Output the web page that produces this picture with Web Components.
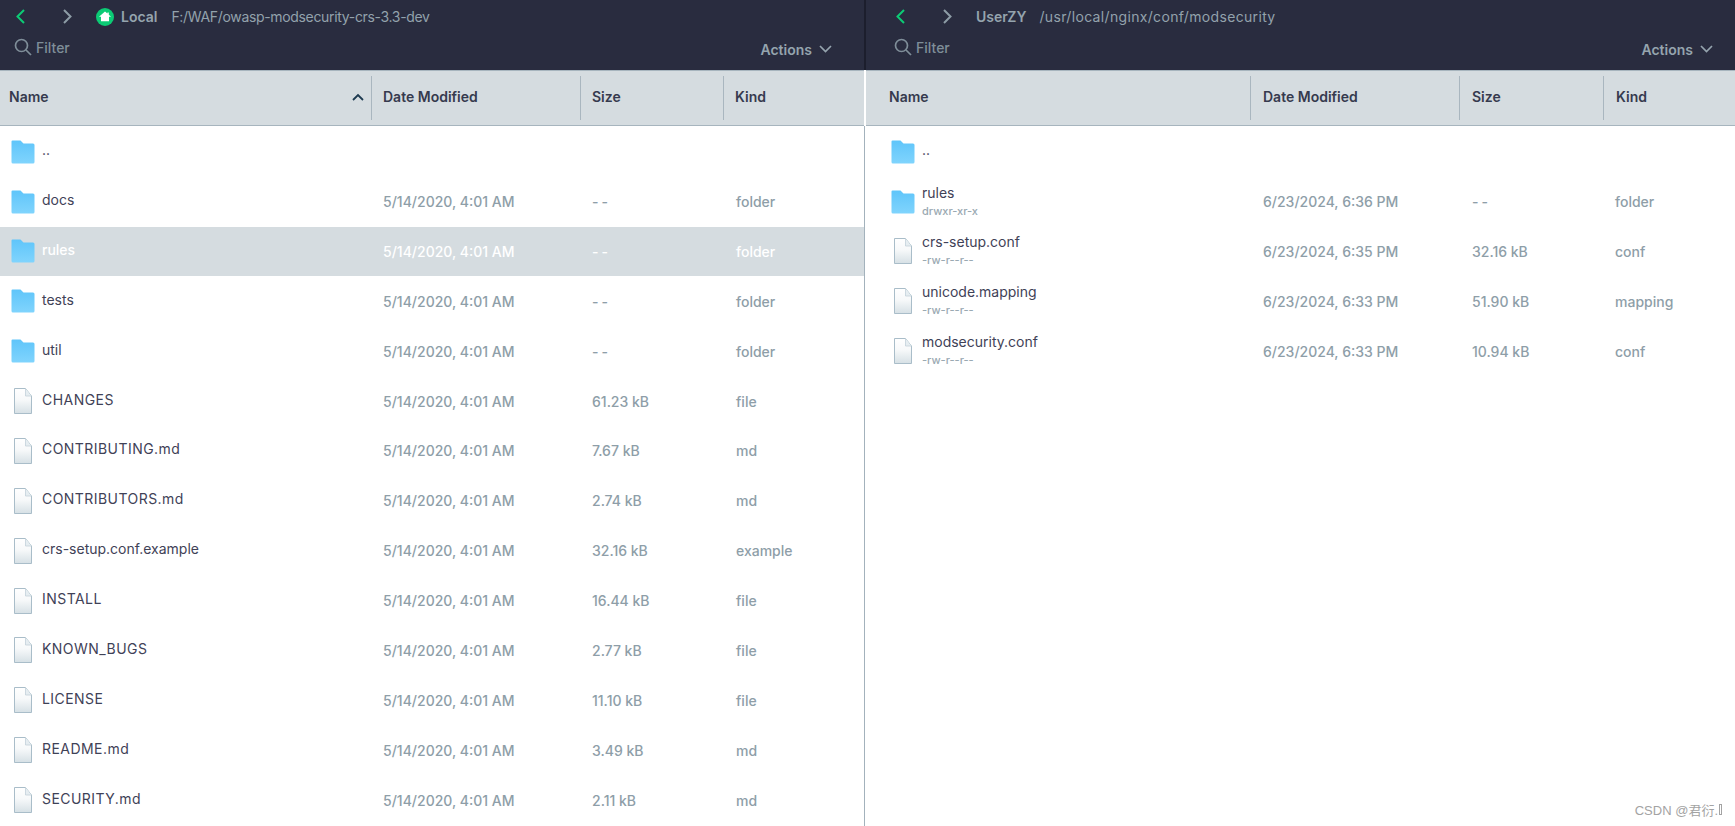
<!DOCTYPE html>
<html>
<head>
<meta charset="utf-8">
<title>SFTP</title>
<style>
  html, body { margin: 0; height: 100%; overflow: hidden; background: #fff; }
  body { font-family: Inter, "Noto Sans CJK SC", sans-serif; }
  #app { display: flex; height: 826px; }
</style>
</head>
<body>
<div id="app">
  <sftp-pane host-icon="home" host="Local" path="F:/WAF/owasp-modsecurity-crs-3.3-dev" sorted
    style="--w:864px; --cols:372px 209px 143px 1fr; --toolbar-l:16px; --toolbar-r:32px; --name-l:9px; --icon-l:11px; --cell-l:11px; --kind-l:12px; --host-gap:14px; --nav-gap:38px; --after-nav:24px; --filter-l:14px; --path-ls:-.33px">
    <file-row type="folder" name=".." ></file-row>
    <file-row type="folder" name="docs" date="5/14/2020, 4:01 AM" size="--" kind="folder"></file-row>
    <file-row type="folder" name="rules" date="5/14/2020, 4:01 AM" size="--" kind="folder" selected></file-row>
    <file-row type="folder" name="tests" date="5/14/2020, 4:01 AM" size="--" kind="folder"></file-row>
    <file-row type="folder" name="util" date="5/14/2020, 4:01 AM" size="--" kind="folder"></file-row>
    <file-row type="file" name="CHANGES" caps date="5/14/2020, 4:01 AM" size="61.23 kB" kind="file"></file-row>
    <file-row type="file" name="CONTRIBUTING.md" caps date="5/14/2020, 4:01 AM" size="7.67 kB" kind="md"></file-row>
    <file-row type="file" name="CONTRIBUTORS.md" caps date="5/14/2020, 4:01 AM" size="2.74 kB" kind="md"></file-row>
    <file-row type="file" name="crs-setup.conf.example" date="5/14/2020, 4:01 AM" size="32.16 kB" kind="example"></file-row>
    <file-row type="file" name="INSTALL" caps date="5/14/2020, 4:01 AM" size="16.44 kB" kind="file"></file-row>
    <file-row type="file" name="KNOWN_BUGS" caps date="5/14/2020, 4:01 AM" size="2.77 kB" kind="file"></file-row>
    <file-row type="file" name="LICENSE" caps date="5/14/2020, 4:01 AM" size="11.10 kB" kind="file"></file-row>
    <file-row type="file" name="README.md" caps date="5/14/2020, 4:01 AM" size="3.49 kB" kind="md"></file-row>
    <file-row type="file" name="SECURITY.md" caps date="5/14/2020, 4:01 AM" size="2.11 kB" kind="md"></file-row>
  </sftp-pane>
  <pane-divider></pane-divider>
  <sftp-pane host="UserZY" path="/usr/local/nginx/conf/modsecurity"
    style="--w:869px; --cols:385px 209px 144px 1fr; --toolbar-l:30px; --toolbar-r:22px; --name-l:23px; --icon-l:25px; --cell-l:12px; --kind-l:11px; --host-gap:13px; --nav-gap:38px; --after-nav:24px; --filter-l:28px; --path-ls:.33px">
    <file-row type="folder" name=".."></file-row>
    <file-row type="folder" name="rules" perm="drwxr-xr-x" date="6/23/2024, 6:36 PM" size="--" kind="folder"></file-row>
    <file-row type="file" name="crs-setup.conf" perm="-rw-r--r--" date="6/23/2024, 6:35 PM" size="32.16 kB" kind="conf"></file-row>
    <file-row type="file" name="unicode.mapping" perm="-rw-r--r--" date="6/23/2024, 6:33 PM" size="51.90 kB" kind="mapping"></file-row>
    <file-row type="file" name="modsecurity.conf" perm="-rw-r--r--" date="6/23/2024, 6:33 PM" size="10.94 kB" kind="conf"></file-row>
  </sftp-pane>
</div>
<csdn-mark>CSDN @君衍.</csdn-mark>

<script>
const FOLDER = `<svg width="24" height="24" viewBox="0 0 24 24"><defs><linearGradient id="fg" x1="0" y1="0" x2="0" y2="1"><stop offset="0" stop-color="#5fc5fa"/><stop offset="1" stop-color="#80d4fd"/></linearGradient></defs><path d="M1.5 0.5H9.5L12.5 3.5H22a1.5 1.5 0 0 1 1.5 1.5V22a1.5 1.5 0 0 1-1.5 1.5H2A1.5 1.5 0 0 1 .5 22V1.5a1 1 0 0 1 1-1z" fill="url(#fg)"/></svg>`;
const FILE = `<svg width="18" height="26" viewBox="0 0 18 26"><defs><linearGradient id="ff" x1="0" y1="0" x2="0" y2="1"><stop offset="0" stop-color="#fff"/><stop offset=".45" stop-color="#f7f9fa"/><stop offset="1" stop-color="#d6e0e5"/></linearGradient></defs><path d="M.5.5H11.5L17.5 8V25.5H.5z" fill="url(#ff)" stroke="#a9bdc9"/><path d="M11.5.5V8H17.5" fill="#e6edf1" stroke="#c3d1d9" stroke-width=".8"/></svg>`;

class SftpPane extends HTMLElement {
  connectedCallback() {
    const host = this.getAttribute('host');
    const path = this.getAttribute('path');
    const home = this.getAttribute('host-icon') === 'home';
    this.attachShadow({ mode: 'open' });
    this.shadowRoot.innerHTML = `
      <style>
        :host { display: flex; flex-direction: column; width: var(--w); flex: none; height: 826px; overflow: hidden; }
        .bar { height: 70px; background: #292c3f; color: #93a2ac; padding: 0 var(--toolbar-r) 0 var(--toolbar-l); box-sizing: border-box; font-size: 14px; }
        .line1 { height: 32px; padding-top: 1px; box-sizing: border-box; display: flex; align-items: center; }
        .forward { margin-left: var(--nav-gap); }
        .home { margin-left: var(--after-nav); margin-right: 7px; width: 18px; height: 18px; flex: none; }
        .plain { width: 0; margin-left: var(--after-nav); }
        .host { font-weight: 600; color: #95a4ae; margin-right: var(--host-gap); }
        .path { letter-spacing: var(--path-ls); }
        .line2 { display: flex; align-items: center; justify-content: space-between; height: 30px; }
        .filter { display: flex; align-items: center; gap: 4px; margin-left: calc(var(--filter-l) - var(--toolbar-l)); font-weight: 500; color: #7f8e99; }
        .actions { display: flex; align-items: center; gap: 7px; font-weight: 600; color: #95a4ae; padding-top: 4px; }
        .cols { display: grid; grid-template-columns: var(--cols); height: 56px; box-sizing: border-box; background: #d5dce0; border-top: 1px solid #a7b5be; border-bottom: 1px solid #a7b5be; font-size: 14px; font-weight: 600; color: #363a4e; align-items: center; }
        .cols > div { display: flex; align-items: center; justify-content: space-between; height: 44px; padding-left: var(--cell-l); padding-bottom: 3px; box-sizing: border-box; }
        .cols > div:first-child { padding-left: var(--name-l); padding-right: 7px; }
        .cols > div:not(:last-child) { border-right: 1px solid #a9b6bf; }
        .rows { flex: 1; display: block; background: #fff; padding-top: .8px; }
      </style>
      <div class="bar">
        <div class="line1">
          <svg width="9" height="15" viewBox="0 0 9 15" fill="none" stroke="#0ccb75" stroke-width="2"><path d="M8 1L1.5 7.5 8 14"/></svg>
          <svg class="forward" width="9" height="15" viewBox="0 0 9 15" fill="none" stroke="#8d9ca6" stroke-width="2"><path d="M1 1l6.5 6.5L1 14"/></svg>
          ${home ? `<svg class="home" viewBox="0 0 18 18"><circle cx="9" cy="9" r="9" fill="#0ccb75"/><path d="M9 3.5L3 8.7H5V13.2H13V8.7H15L12.8 6.8V4.6H11.4V5.6z" fill="#fff"/></svg>` : `<span class="plain"></span>`}
          <span class="host">${host}</span>
          <span class="path">${path}</span>
        </div>
        <div class="line2">
          <div class="filter">
            <svg width="18" height="18" viewBox="0 0 18 18" fill="none" stroke="#7f8e99" stroke-width="1.7"><circle cx="7.5" cy="7.5" r="6"/><path d="M12 12l5 5"/></svg>
            <span>Filter</span>
          </div>
          <div class="actions">
            <span>Actions</span>
            <svg width="13" height="8" viewBox="0 0 13 8" fill="none" stroke="#95a4ae" stroke-width="1.7"><path d="M1 1l5.5 5.5L12 1"/></svg>
          </div>
        </div>
      </div>
      <div class="cols">
        <div><span>Name</span>${this.hasAttribute('sorted') ? `<svg width="12" height="8" viewBox="0 0 12 8" fill="none" stroke="#1d3a50" stroke-width="1.8"><path d="M1 7l5-5 5 5"/></svg>` : ''}</div>
        <div>Date Modified</div>
        <div>Size</div>
        <div>Kind</div>
      </div>
      <div class="rows"><slot></slot></div>`;
  }
}
customElements.define('sftp-pane', SftpPane);

class FileRow extends HTMLElement {
  connectedCallback() {
    const a = n => this.getAttribute(n) || '';
    const perm = a('perm');
    const isFile = a('type') === 'file';
    const empty = a('size') === '--';
    this.attachShadow({ mode: 'open' });
    this.shadowRoot.innerHTML = `
      <style>
        :host { display: grid; grid-template-columns: var(--cols); height: 49.88px; align-items: center; font-size: 14px; color: #8e9ea8; font-weight: 500; }
        :host([selected]) { background: #d5dce0; color: #fff; }
        .name { display: flex; align-items: center; padding-left: var(--icon-l); }
        .ico { width: 24px; height: 26px; display: flex; align-items: center; justify-content: ${isFile ? 'center' : 'flex-start'}; flex: none; margin-right: 7px; }
        .label { color: #3f4257; font-weight: 400; transform: translateY(-2px); }
        :host([caps]) .label { letter-spacing: .45px; }
        :host([selected]) .label { color: #fff; font-weight: 500; }
        .perm { font-size: 11px; color: #9aa9b2; margin-top: 2px; line-height: 13px; }
        .text { line-height: 17px; }
        .cell { padding-left: var(--cell-l); }
        .cell.kind { padding-left: var(--kind-l); }
        .dashes { letter-spacing: 3px; }
      </style>
      <div class="name">
        <div class="ico">${isFile ? FILE : FOLDER}</div>
        <div class="text"><div class="label">${a('name')}</div>${perm ? `<div class="perm">${perm}</div>` : ''}</div>
      </div>
      <div class="cell">${a('date')}</div>
      <div class="cell${empty ? ' dashes' : ''}">${a('size')}</div>
      <div class="cell kind">${a('kind')}</div>`;
  }
}
customElements.define('file-row', FileRow);

class PaneDivider extends HTMLElement {
  connectedCallback() {
    this.attachShadow({ mode: 'open' });
    this.shadowRoot.innerHTML = `
      <style>
        :host { display: flex; flex-direction: column; width: 2px; flex: none; }
        .a { height: 70px; background: #1c1e2d; }
        .b { height: 56px; background: #fff; }
        .c { flex: 1; background: linear-gradient(to right, #a3b2bc 50%, #fff 50%); }
      </style>
      <div class="a"></div><div class="b"></div><div class="c"></div>`;
  }
}
customElements.define('pane-divider', PaneDivider);

class CsdnMark extends HTMLElement {
  connectedCallback() {
    this.attachShadow({ mode: 'open' });
    this.shadowRoot.innerHTML = `
      <style>
        :host { position: absolute; right: 13px; top: 800px; display: flex; align-items: center; font: 13px "Liberation Sans", "Noto Sans CJK SC", sans-serif; color: #a3a3a3; }
        i { display: inline-block; width: 3px; height: 11px; border: 1px solid #a3a3a3; box-sizing: border-box; margin-left: 1px; }
      </style>
      <slot></slot><i></i>`;
  }
}
customElements.define('csdn-mark', CsdnMark);
</script>
</body>
</html>
